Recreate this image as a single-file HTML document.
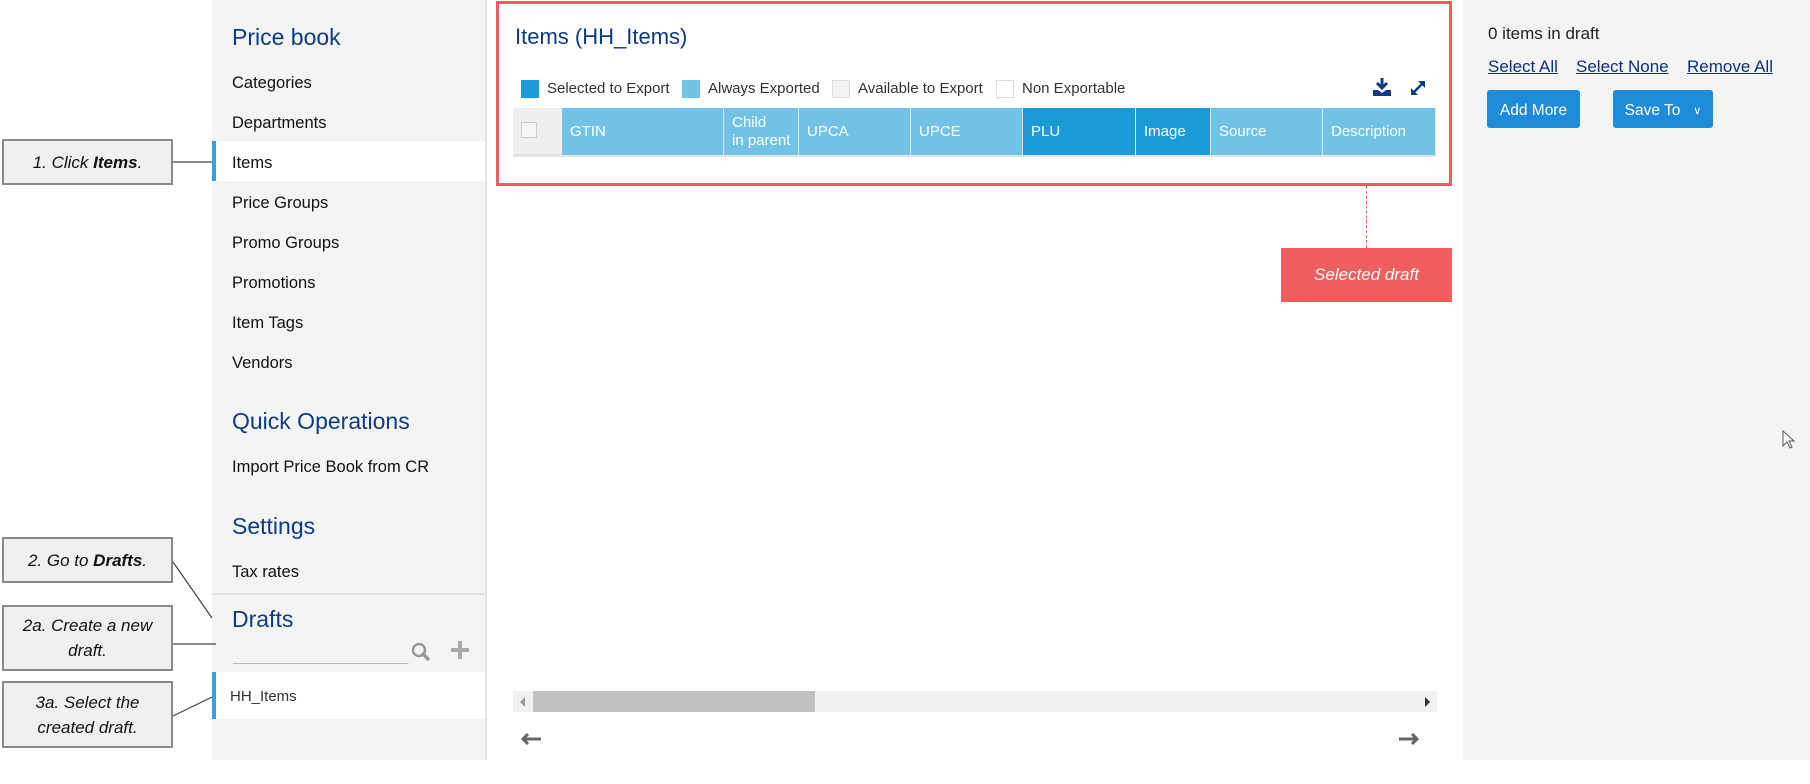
<!DOCTYPE html>
<html><head><meta charset="utf-8"><style>
*{margin:0;padding:0;box-sizing:border-box}
body{width:1810px;height:784px;background:#fff;position:relative;overflow:hidden;font-family:"Liberation Sans","DejaVu Sans",sans-serif;color:#222}
.abs{position:absolute}
#side{left:212px;top:0;width:275px;height:760px;background:#f4f4f4;border-right:2px solid #e4e4e4}
.h{position:absolute;left:20px;color:#0d3b85;font-size:23px}
.it{position:absolute;left:20px;font-size:16.5px;color:#111}
.sel{position:absolute;left:0;width:273px;height:40px;background:#fff;border-left:4px solid #3a9ee4}
#right{left:1463px;top:0;width:347px;height:760px;background:#f4f4f4}
.ann{position:absolute;left:2px;width:171px;background:#f0f0f0;border:2px solid #8a8a8a;font-style:italic;font-size:17px;text-align:center;color:#111;display:flex;align-items:center;justify-content:center;line-height:25px}
.th{position:absolute;top:108px;height:47px;color:#fff;font-size:15px;padding-left:8px;display:flex;align-items:center;border-right:1px solid #d6e9f5}
.sq{position:absolute;top:80px;width:18px;height:18px}
.lg{position:absolute;top:80px;font-size:15px;color:#333}
a{color:#0d2f80;text-decoration:underline;font-size:17px;position:absolute;top:57px}
.btn{position:absolute;top:90px;height:38px;background:#1f8bdb;color:#fff;border-radius:3px;font-size:15.5px;display:flex;align-items:center;justify-content:center;padding-top:3px}
</style></head><body>
<div id="side" class="abs">
 <div class="h" style="top:24px">Price book</div>
 <div class="it" style="top:74px">Categories</div>
 <div class="it" style="top:114px">Departments</div>
 <div class="sel" style="top:141px"></div>
 <div class="it" style="top:154px">Items</div>
 <div class="it" style="top:194px">Price Groups</div>
 <div class="it" style="top:234px">Promo Groups</div>
 <div class="it" style="top:274px">Promotions</div>
 <div class="it" style="top:314px">Item Tags</div>
 <div class="it" style="top:354px">Vendors</div>
 <div class="h" style="top:408px">Quick Operations</div>
 <div class="it" style="top:458px">Import Price Book from CR</div>
 <div class="h" style="top:513px">Settings</div>
 <div class="it" style="top:563px">Tax rates</div>
 <div class="abs" style="left:0;top:593px;width:273px;height:2px;background:#e2e2e2"></div>
 <div class="h" style="top:606px">Drafts</div>
 <div class="abs" style="left:21px;top:663px;width:175px;height:1px;background:#bbb"></div>
 <svg class="abs" style="left:198px;top:641px" width="22" height="22" viewBox="0 0 22 22"><circle cx="9" cy="9" r="6" fill="none" stroke="#999" stroke-width="2.5"/><path d="M13 13l5 5" stroke="#999" stroke-width="3.5" stroke-linecap="round"/></svg>
 <svg class="abs" style="left:237px;top:639px" width="22" height="22"><path d="M11 2v18M2 11h18" stroke="#aaa" stroke-width="4"/></svg>
 <div class="sel" style="top:672px;height:47px"></div>
 <div class="it" style="top:688px;left:18px;font-size:15px;color:#333">HH_Items</div>
</div>

<div class="ann" style="top:139px;height:46px">1. Click&nbsp;<b>Items</b>.</div>
<div class="ann" style="top:537px;height:46px">2. Go to&nbsp;<b>Drafts</b>.</div>
<div class="ann" style="top:605px;height:66px">2a. Create a new<br>draft.</div>
<div class="ann" style="top:681px;height:67px">3a. Select the<br>created draft.</div>
<svg class="abs" style="left:0;top:0" width="220" height="784"><g stroke="#444" stroke-width="1.2" fill="none"><path d="M173 162H212"/><path d="M173 562L212 618"/><path d="M173 644H216"/><path d="M173 716L212 697"/></g></svg>

<div class="abs" style="left:496px;top:1px;width:956px;height:185px;border:3px solid #ef5b5e"></div>
<div class="abs" style="left:515px;top:24px;font-size:22px;color:#0d3b85">Items (HH_Items)</div>
<div class="sq" style="left:521px;background:#1a9ad6"></div><div class="lg" style="left:547px">Selected to Export</div>
<div class="sq" style="left:682px;background:#72c2e6"></div><div class="lg" style="left:708px">Always Exported</div>
<div class="sq" style="left:832px;background:#f2f2f2;border:1px solid #ddd"></div><div class="lg" style="left:858px">Available to Export</div>
<div class="sq" style="left:996px;background:#fff;border:1px solid #ddd"></div><div class="lg" style="left:1022px">Non Exportable</div>
<svg class="abs" style="left:1372px;top:77px" width="20" height="20"><path d="M10 1v9M5 6l5 5 5-5" stroke="#0d3b85" stroke-width="3" fill="none"/><path d="M1 13h5l4 3 4-3h5v6H1z" fill="#0d3b85"/></svg>
<svg class="abs" style="left:1409px;top:79px" width="18" height="18"><path d="M3 15L15 3" stroke="#0d3b85" stroke-width="2.5"/><path d="M9 2h7v7zM2 9v7h7z" fill="#0d3b85"/></svg>
<div class="abs" style="left:513px;top:108px;width:49px;height:48px;background:#efefef;border-bottom:2px solid #e0e0e0"></div>
<div class="abs" style="left:521px;top:122px;width:16px;height:16px;border:1px solid #ccc;background:#f6f6f6"></div>
<div class="th" style="left:562px;width:162px;background:#72c2e6">GTIN</div>
<div class="th" style="left:724px;width:75px;background:#72c2e6;line-height:18px">Child<br>in parent</div>
<div class="th" style="left:799px;width:112px;background:#72c2e6">UPCA</div>
<div class="th" style="left:911px;width:112px;background:#72c2e6">UPCE</div>
<div class="th" style="left:1023px;width:113px;background:#1a9ad6">PLU</div>
<div class="th" style="left:1136px;width:75px;background:#1a9ad6">Image</div>
<div class="th" style="left:1211px;width:112px;background:#72c2e6">Source</div>
<div class="th" style="left:1323px;width:113px;background:#72c2e6">Description</div>
<div class="abs" style="left:513px;top:155px;width:924px;height:2px;background:#e4e4e4"></div>

<div class="abs" style="left:1366px;top:186px;height:62px;border-left:1px dashed #ef5b5e"></div>
<div class="abs" style="left:1281px;top:248px;width:171px;height:54px;background:#f05e60;color:#fff;font-style:italic;font-size:17px;display:flex;align-items:center;justify-content:center">Selected draft</div>

<div class="abs" style="left:513px;top:691px;width:924px;height:21px;background:#f1f1f1"></div>
<div class="abs" style="left:533px;top:691px;width:282px;height:21px;background:#c1c1c1"></div>
<div class="abs" style="left:520px;top:697px;border:5px solid transparent;border-right:5px solid #999;border-left:0"></div>
<div class="abs" style="left:1425px;top:697px;border:5px solid transparent;border-left:5px solid #333;border-right:0"></div>
<svg class="abs" style="left:521px;top:733px" width="22" height="12"><path d="M2 6H20M7 1L2 6l5 5" stroke="#666" stroke-width="3" fill="none"/></svg>
<svg class="abs" style="left:1397px;top:733px" width="22" height="12"><path d="M2 6H20M15 1l5 5-5 5" stroke="#666" stroke-width="3" fill="none"/></svg>

<div id="right" class="abs"></div>
<div class="abs" style="left:1488px;top:24px;font-size:17px;color:#222">0 items in draft</div>
<a style="left:1488px">Select All</a><a style="left:1576px">Select None</a><a style="left:1687px">Remove All</a>
<div class="btn" style="left:1487px;width:93px">Add More</div>
<div class="btn" style="left:1613px;width:100px">Save To&nbsp;&nbsp;&nbsp;<span style="font-size:11px">&#x2228;</span></div>
<svg class="abs" style="left:1782px;top:430px" width="14" height="20"><path d="M1 1v15l4-4 3 6 2-1-3-6h5z" fill="#fff" stroke="#555"/></svg>
</body></html>
